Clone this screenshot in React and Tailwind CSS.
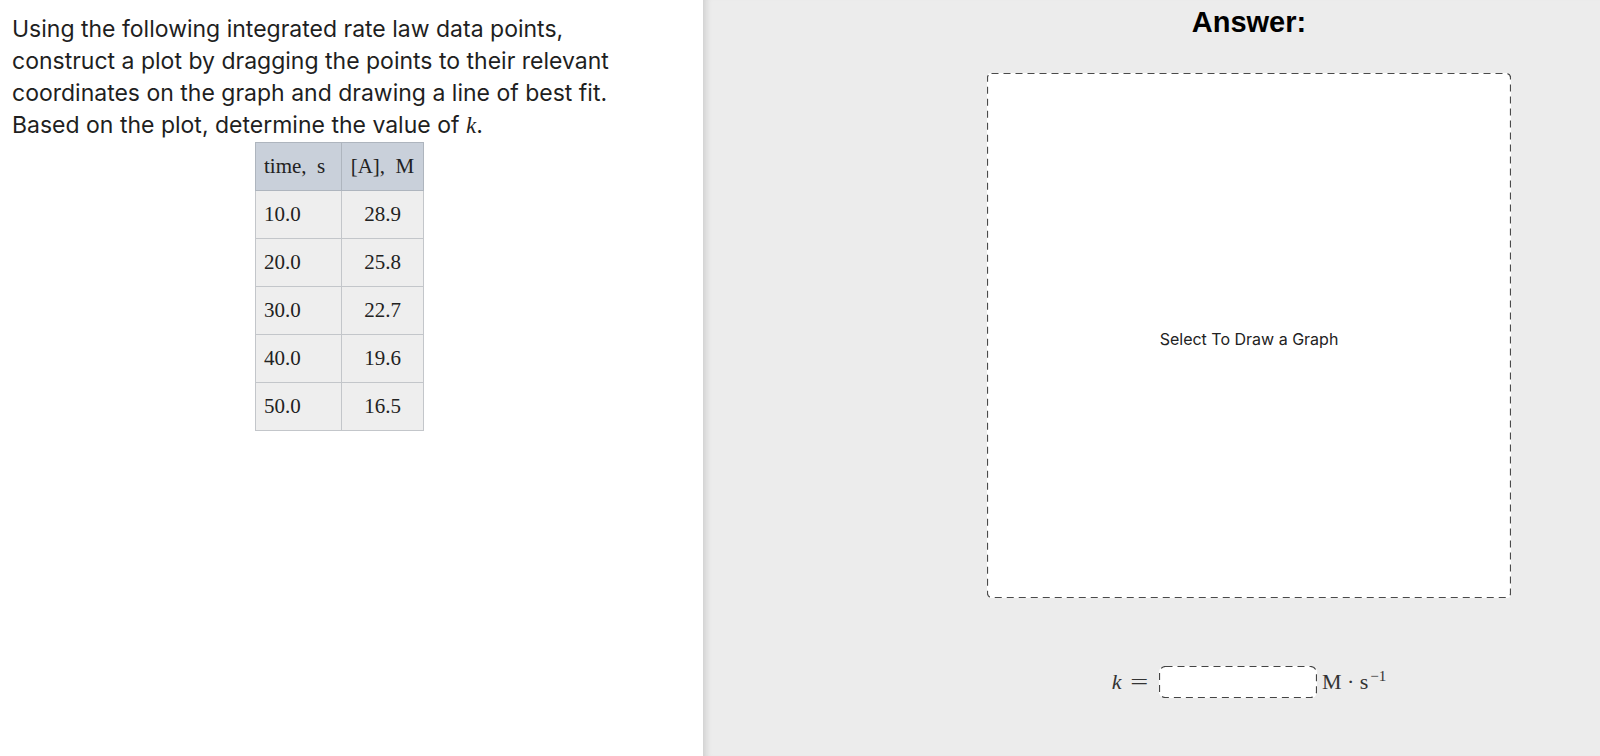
const rows = [
  ["10.0", "28.9"],
  ["20.0", "25.8"],
  ["30.0", "22.7"],
  ["40.0", "19.6"],
  ["50.0", "16.5"],
];

const serif = "font-['Liberation_Serif',serif]";

function DashedFrame({ w, h, r, color }) {
  return (
    <svg className="pointer-events-none absolute left-0 top-0" width={w} height={h}>
      <rect
        x="0.5"
        y="0.5"
        width={w - 1}
        height={h - 1}
        rx={r}
        fill="none"
        stroke={color}
        strokeWidth="1.2"
        strokeDasharray="7 5"
      />
    </svg>
  );
}

export default function App() {
  return (
    <div className="flex h-[756px] w-[1600px] overflow-hidden bg-white">
      <div className="relative z-10 w-[703px] shrink-0 bg-white pl-3 pt-[13px] text-[#1f1f1f] font-['Inter',sans-serif]">
        <p className="text-[23px] leading-8 tracking-[0px]">
          Using the following integrated rate law data points,
          <br />
          construct a plot by dragging the points to their relevant
          <br />
          coordinates on the graph and drawing a line of best fit.
          <br />
          Based on the plot, determine the value of <span className={`${serif} italic`}>k</span>.
        </p>
        <table className={`${serif} ml-[243px] border-collapse text-[21px] text-[#222]`}>
          <thead>
            <tr className="h-[48px] bg-[#c9d0da]">
              <th className="w-[86px] border border-[#aeb5be] px-2 text-left font-normal whitespace-nowrap">time,&nbsp; s</th>
              <th className="w-[82px] border border-[#aeb5be] px-2 text-center font-normal whitespace-nowrap">[A],&nbsp; M</th>
            </tr>
          </thead>
          <tbody>
            {rows.map(([t, a]) => (
              <tr key={t} className="h-[48px] bg-[#eeeeee]">
                <td className="border border-[#c3c6ca] px-2 text-left">{t}</td>
                <td className="border border-[#c3c6ca] px-2 text-center">{a}</td>
              </tr>
            ))}
          </tbody>
        </table>
      </div>

      <div className="flex flex-1 flex-col bg-[#ececec] pl-[284px] shadow-[inset_8px_0_6px_-5px_rgba(0,0,0,0.12)]">
        <div className="flex w-[524px] flex-col items-center">
          <h2 className="mt-[6px] text-[29px] leading-8 font-bold text-black font-['Liberation_Sans',sans-serif]">
            Answer:
          </h2>
          <div className="relative mt-[35px] flex h-[525px] w-[524px] items-center justify-center rounded-[4px] bg-white">
            <DashedFrame w={524} h={525} r={4} color="#4a4a4a" />
            <span className="mt-[6px] text-[16px] text-[#222] font-['Inter',sans-serif]">Select To Draw a Graph</span>
          </div>
          <div className={`${serif} mt-[67px] flex items-center text-[22px] text-[#333]`}>
            <span className="italic">k</span>
            <span className="ml-[12px] inline-block scale-x-[1.45]">=</span>
            <div className="relative ml-[13px] h-[32px] w-[158px] rounded-[6px] bg-white">
              <DashedFrame w={158} h={32} r={6} color="#444" />
            </div>
            <span className="ml-[5px] whitespace-nowrap">M&nbsp;·&nbsp;s</span>
            <sup className="relative -top-[6px] ml-[2px] text-[15px]">−1</sup>
          </div>
        </div>
      </div>
    </div>
  );
}
